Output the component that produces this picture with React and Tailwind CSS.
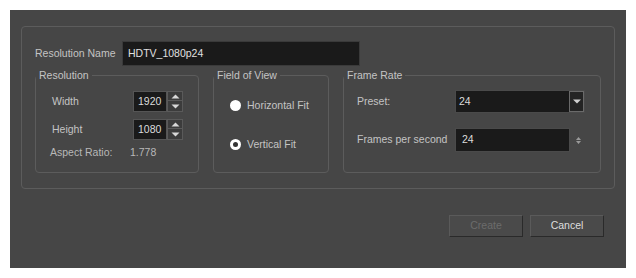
import React from "react";

const font = { fontFamily: '"Liberation Sans", Arial, sans-serif' };

function Up() {
  return (
    <svg width="9" height="5" viewBox="0 0 9 5">
      <path d="M0.5 4.5 L4.5 0.5 L8.5 4.5 Z" fill="#d8d8d8" />
    </svg>
  );
}

function Down() {
  return (
    <svg width="9" height="5" viewBox="0 0 9 5">
      <path d="M0.5 0.5 L4.5 4.5 L8.5 0.5 Z" fill="#d8d8d8" />
    </svg>
  );
}

function SpinBox({ value }) {
  return (
    <div className="flex h-[21px]">
      <div className="w-[34px] h-full bg-[#1a1a1a] border border-[#555] flex items-center pl-[4px] text-[#dcdcdc]">
        {value}
      </div>
      <div className="flex flex-col w-[16px] h-full">
        <div className="h-[10px] bg-[#3c3c3c] border border-[#5a5a5a] flex items-center justify-center">
          <Up />
        </div>
        <div className="h-[11px] bg-[#3c3c3c] border border-t-0 border-[#5a5a5a] flex items-center justify-center">
          <Down />
        </div>
      </div>
    </div>
  );
}

function Group({ title, width, inner, children }) {
  return (
    <fieldset className={"border border-[#5c5c5c] rounded-[4px] h-[104px] p-0 " + width}>
      <legend className="px-[3px] leading-[13px] text-[#c4c4c4]">{title}</legend>
      <div className={inner}>{children}</div>
    </fieldset>
  );
}

function Radio({ checked, label }) {
  return (
    <div className="flex items-center gap-[6px]">
      <span className="w-[11px] h-[11px] rounded-full bg-white flex items-center justify-center">
        {checked && <span className="w-[5px] h-[5px] rounded-full bg-[#333]" />}
      </span>
      <span className="text-[#c4c4c4]">{label}</span>
    </div>
  );
}

export default function App() {
  return (
    <div className="w-[636px] h-[278px] bg-white p-[10px] text-[10.5px]" style={font}>
      <div className="w-[616px] h-[258px] bg-[#464646] px-[11px] pt-[16px] flex flex-col">
        <div className="h-[163px] border border-[#5c5c5c] rounded-[4px] px-[13px] pt-[14px]">
          <div className="flex items-center">
            <span className="w-[87px] text-[#c4c4c4]">Resolution Name</span>
            <div className="w-[238px] h-[25px] bg-[#1a1a1a] border border-[#3a3a3a] flex items-center pl-[5px] text-[#e0e0e0]">
              HDTV_1080p24
            </div>
          </div>

          <div className="flex gap-[14px] mt-[3px]">
            <Group title="Resolution" width="w-[164px]" inner="pl-[16px] pt-[9px]">
              <div className="flex items-center">
                <span className="w-[81px] text-[#c4c4c4]">Width</span>
                <SpinBox value="1920" />
              </div>
              <div className="flex items-center mt-[7px]">
                <span className="w-[81px] text-[#c4c4c4]">Height</span>
                <SpinBox value="1080" />
              </div>
              <div className="flex items-center mt-[5px] -ml-[2px]">
                <span className="w-[80px] text-[#b8b8b8]">Aspect Ratio:</span>
                <span className="text-[#b8b8b8]">1.778</span>
              </div>
            </Group>

            <Group title="Field of View" width="w-[116px]" inner="pl-[16px] pt-[16px]">
              <Radio label="Horizontal Fit" />
              <div className="mt-[23px]">
                <Radio checked label="Vertical Fit" />
              </div>
            </Group>

            <Group title="Frame Rate" width="w-[258px]" inner="pl-[13px] pt-[8px]">
              <div className="flex items-center">
                <span className="w-[98px] text-[#c4c4c4]">Preset:</span>
                <div className="w-[130px] h-[23px] bg-[#1a1a1a] border border-[#4a4a4a] flex items-center">
                  <span className="flex-1 pl-[3px] text-[#dcdcdc]">24</span>
                  <div className="w-[15px] h-full border border-[#6a6a6a] bg-[#242424] flex items-center justify-center">
                    <svg width="8" height="5" viewBox="0 0 8 5">
                      <path d="M0 0.5 L8 0.5 L4 4.5 Z" fill="#cfcfcf" />
                    </svg>
                  </div>
                </div>
              </div>
              <div className="flex items-center mt-[15px]">
                <span className="w-[98px] text-[#c4c4c4]">Frames per second</span>
                <div className="w-[115px] h-[24px] bg-[#1a1a1a] border border-[#4a4a4a] flex items-center pl-[6px] text-[#dcdcdc]">
                  24
                </div>
                <div className="ml-[6px] flex flex-col gap-[1px]">
                  <svg width="5" height="3" viewBox="0 0 5 3">
                    <path d="M0 3 L2.5 0 L5 3 Z" fill="#9a9a9a" />
                  </svg>
                  <svg width="5" height="3" viewBox="0 0 5 3">
                    <path d="M0 0 L2.5 3 L5 0 Z" fill="#9a9a9a" />
                  </svg>
                </div>
              </div>
            </Group>
          </div>
        </div>

        <div className="flex justify-end gap-[7px] mt-[26px] pr-[11px]">
          <button className="w-[74px] h-[22px] bg-[#4a4a4a] border border-[#2a2a2a] border-t-[#5a5a5a] border-l-[#5a5a5a] text-[#6c6c6c]">
            Create
          </button>
          <button className="w-[74px] h-[22px] bg-[#4a4a4a] border border-[#2a2a2a] border-t-[#5a5a5a] border-l-[#5a5a5a] text-[#dedede]">
            Cancel
          </button>
        </div>
      </div>
    </div>
  );
}
